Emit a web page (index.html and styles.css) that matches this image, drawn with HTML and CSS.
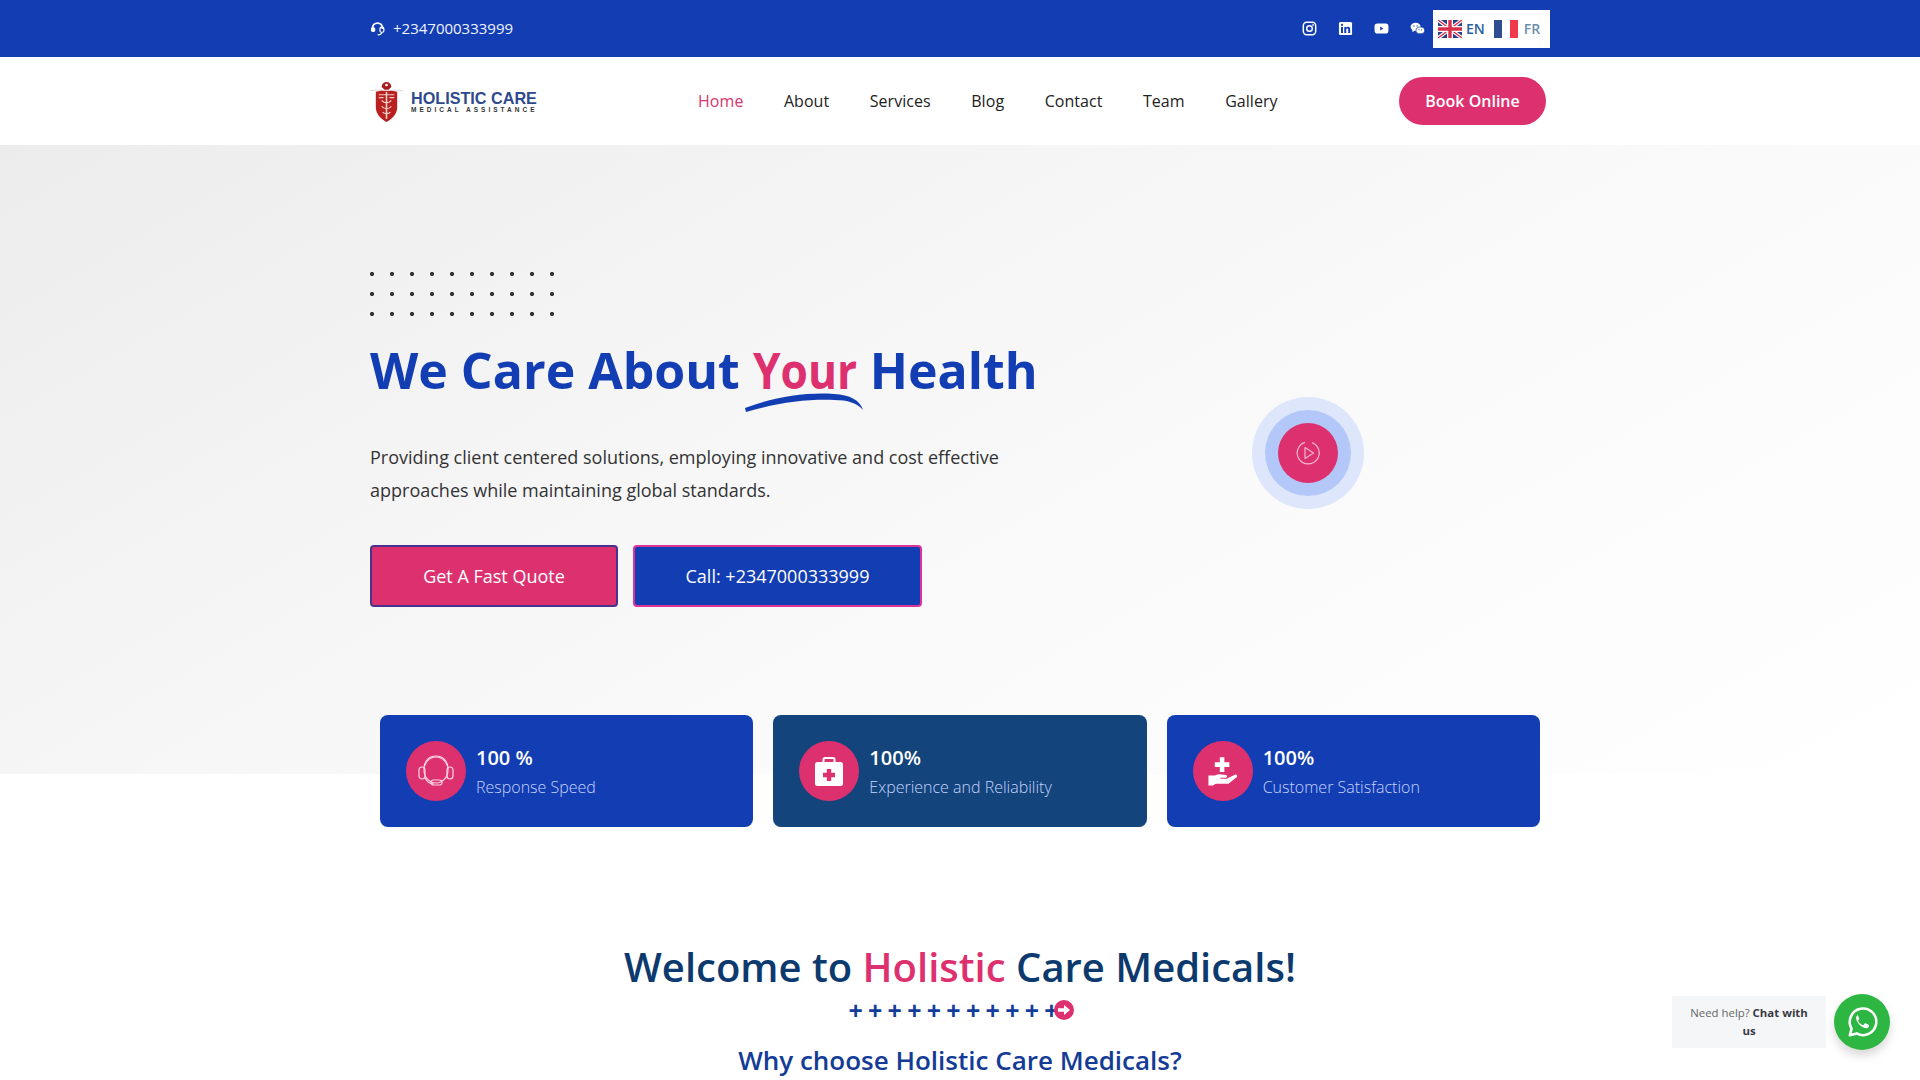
FILE: index.html
```html
<!DOCTYPE html>
<html lang="en">
<head>
<meta charset="utf-8">
<title>Holistic Care Medical Assistance</title>
<link rel="stylesheet" href="styles.css">
</head>
<body>
<header class="topbar">
  <div class="container topbar-inner">
    <a class="top-phone">
      <svg class="phone-icon" viewBox="0 0 16 16"><path d="M8 1.200a6.300 6.300 0 0 0-6.300 6.300v1.100h2V7.500a4.300 4.300 0 0 1 8.600 0v1.100h2V7.500A6.300 6.300 0 0 0 8 1.200z" fill="#fff"/><rect x="1" y="6.600" width="4.600" height="5" rx="1.800" fill="#fff"/><rect x="10.600" y="6.600" width="4.200" height="5.400" rx="1.600" fill="none" stroke="#fff" stroke-width="1.300"/><path d="M12.600 12c0 2-1.600 2.700-4.400 2.700" fill="none" stroke="#fff" stroke-width="1.300"/></svg>
      <span>+2347000333999</span>
    </a>
    <div class="top-right">
      <div class="socials">
        <svg viewBox="0 0 16 16"><rect x="1.400" y="1.400" width="13.200" height="13.200" rx="3.600" fill="none" stroke="#fff" stroke-width="1.600"/><circle cx="8" cy="8" r="3" fill="none" stroke="#fff" stroke-width="1.600"/><circle cx="11.800" cy="4.200" r=".9" fill="#fff"/></svg>
        <svg viewBox="0 0 16 16"><rect x="1" y="1" width="14" height="14" rx="1.600" fill="#fff"/><rect x="3.200" y="6.400" width="2.100" height="6.400" fill="#133db2"/><circle cx="4.250" cy="4.200" r="1.200" fill="#133db2"/><path d="M6.700 6.400h2v.9c.4-.6 1.100-1.100 2.100-1.100 1.700 0 2.200 1.100 2.200 2.800v3.800h-2.100V9.500c0-.8-.2-1.500-1-1.500-.9 0-1.100.7-1.100 1.500v3.300H6.700z" fill="#133db2"/></svg>
        <svg viewBox="0 0 16 16"><rect x=".6" y="2.600" width="14.800" height="10.800" rx="3" fill="#fff"/><path d="M6.600 5.800 10 8l-3.400 2.200z" fill="#133db2"/></svg>
        <svg viewBox="0 0 16 16"><ellipse cx="6" cy="6.200" rx="5.400" ry="4.400" fill="#fff"/><path d="M2.800 9.200 2.400 12l2.800-1.800z" fill="#fff"/><ellipse cx="11" cy="10" rx="4.600" ry="3.600" fill="#fff" stroke="#133db2" stroke-width=".8"/><circle cx="4.200" cy="5.200" r=".7" fill="#133db2"/><circle cx="7.600" cy="5.200" r=".7" fill="#133db2"/><circle cx="9.600" cy="9.400" r=".6" fill="#133db2"/><circle cx="12.400" cy="9.400" r=".6" fill="#133db2"/></svg>
      </div>
      <div class="lang">
        <svg class="flag" viewBox="0 0 24 18"><rect width="24" height="18" fill="#2b3f86"/><path d="M0 0 24 18M24 0 0 18" stroke="#fff" stroke-width="3.600"/><path d="M0 0 24 18M24 0 0 18" stroke="#d8304a" stroke-width="1.400"/><path d="M12 0v18M0 9h24" stroke="#fff" stroke-width="6"/><path d="M12 0v18M0 9h24" stroke="#d8304a" stroke-width="3.400"/></svg>
        <span class="lang-en">EN</span>
        <svg class="flag flag-fr" viewBox="0 0 24 18"><rect width="8" height="18" fill="#2f4e92"/><rect x="8" width="8" height="18" fill="#fff"/><rect x="16" width="8" height="18" fill="#f03a4c"/></svg>
        <span class="lang-fr">FR</span>
      </div>
    </div>
  </div>
</header>

<nav class="navbar">
  <div class="container navbar-inner">
    <a class="logo">
      <svg class="logo-mark" viewBox="0 0 34 44"><path d="M0 11c6-1 11-1 13 0M34 11c-6-1-11-1-13 0" stroke="#d9d5cf" stroke-width="1" fill="none"/><path d="M12 7a5 5 0 0 1 10 0l-3 3h-4z" fill="#a61c20"/><circle cx="17" cy="5" r="1.400" fill="#fff"/><path d="M6 12c3-1 7-1 11-1s8 0 11 1v16c0 7-5 12-11 15C11 40 6 35 6 28z" fill="#b9201f"/><path d="M9 15h16M9 18h5M20 18h5" stroke="#eec9c0" stroke-width="1.100" fill="none"/><path d="M17 12v28" stroke="#f1d6cd" stroke-width="1.600"/><path d="M12 21c3 3 7 3 10 0M12 27c3 3 7 3 10 0M13 33c2 2 6 2 8 0" stroke="#f1d6cd" stroke-width="1.200" fill="none"/></svg>
      <span class="logo-text">
        <span class="logo-title">HOLISTIC CARE</span>
        <span class="logo-sub">MEDICAL ASSISTANCE</span>
      </span>
    </a>
    <ul class="menu">
      <li class="active">Home</li>
      <li>About</li>
      <li>Services</li>
      <li>Blog</li>
      <li>Contact</li>
      <li>Team</li>
      <li>Gallery</li>
    </ul>
    <a class="book">Book Online</a>
  </div>
</nav>

<section class="hero">
  <div class="container hero-inner">
    <div class="hero-copy">
      <div class="dots"></div>
      <h1>We Care About <span class="your"><span class="your-word">Your</span><svg class="swoosh" viewBox="0 0 120 20"><path d="M1 16C30 5 62 0 90 2c16 1 26 6 29 16-6-7-15-10-29-10C62 7 32 11 2 20z" fill="#133db2"/></svg></span> Health</h1>
      <p>Providing client centered solutions, employing innovative and cost effective approaches while maintaining global standards.</p>
      <div class="cta">
        <a class="btn btn-pink">Get A Fast Quote</a>
        <a class="btn btn-blue">Call: +2347000333999</a>
      </div>
    </div>
    <div class="hero-media">
      <div class="ring-outer"><div class="ring-mid"><div class="ring-core">
        <svg viewBox="0 0 26 26"><path d="M17 2.600A11 11 0 1 1 10 2.400" fill="none" stroke="#f6b4cb" stroke-width="1.200"/><path d="M10 7.500 18.500 13 10 18.500z" fill="none" stroke="#f6b4cb" stroke-width="1.200" stroke-linejoin="round"/></svg>
      </div></div></div>
    </div>
  </div>
</section>

<section class="stats">
  <article class="stat">
    <div class="stat-icon">
      <svg viewBox="0 0 40 40"><ellipse cx="20" cy="19" rx="12" ry="13" fill="none" stroke="#fbd3e0" stroke-width="1.200"/><path d="M8 18C8 9 14 5 20 5s12 4 12 13" fill="none" stroke="#fbd3e0" stroke-width="1.200"/><rect x="3" y="16" width="6" height="12" rx="3" fill="none" stroke="#fbd3e0" stroke-width="1.200"/><rect x="31" y="16" width="6" height="12" rx="3" fill="none" stroke="#fbd3e0" stroke-width="1.200"/><path d="M9 27c2 4 5 6 9 6" fill="none" stroke="#fbd3e0" stroke-width="1.200"/><rect x="15" y="29" width="11" height="5" rx="2.500" fill="none" stroke="#fbd3e0" stroke-width="1.200"/></svg>
    </div>
    <div class="stat-text"><h3>100 %</h3><p>Response Speed</p></div>
  </article>
  <article class="stat stat-navy">
    <div class="stat-icon">
      <svg viewBox="0 0 40 40"><path d="M14.500 11V8.500A1.500 1.500 0 0 1 16 7h8a1.500 1.500 0 0 1 1.500 1.500V11" fill="none" stroke="#fff" stroke-width="2"/><rect x="6" y="11" width="28" height="24" rx="2.500" fill="#fff"/><path d="M17.800 18h4.400v3.800H26v4.400h-3.800V30h-4.400v-3.800H14v-4.400h3.800z" fill="#dd316f"/></svg>
    </div>
    <div class="stat-text"><h3>100%</h3><p>Experience and Reliability</p></div>
  </article>
  <article class="stat">
    <div class="stat-icon">
      <svg viewBox="-1 -3 44 44"><path d="M17.500 4h5v5.500H28v5h-5.500V20h-5v-5.500H12v-5h5.500z" fill="#fff"/><path d="M5 24h7l4-1.500c2 0 5 .5 8 1 2 .5 2 3-.5 3H18v1h7l9-4.500c2-.8 3.500 1.500 2 3L27 33H13l-3 2H5z" fill="#fff"/></svg>
    </div>
    <div class="stat-text"><h3>100%</h3><p>Customer Satisfaction</p></div>
  </article>
</section>

<section class="welcome">
  <h2>Welcome to <span>Holistic</span> Care Medicals!</h2>
  <div class="divider">
    <span>+</span><span>+</span><span>+</span><span>+</span><span>+</span><span>+</span><span>+</span><span>+</span><span>+</span><span>+</span><span>+</span>
    <svg class="divider-end" viewBox="0 0 20 20"><circle cx="10" cy="10" r="10" fill="#dd316f"/><path d="M4 8.300h6V5l6 5-6 5v-3.300H4z" fill="#fff"/></svg>
  </div>
  <h4>Why choose Holistic Care Medicals?</h4>
</section>

<aside class="chat">
  <div class="chat-note">Need help? <strong>Chat with</strong><br><strong>us</strong></div>
  <div class="chat-btn">
    <svg viewBox="0 0 32 32"><path d="M5 27l1.600-5.700A11.500 11.500 0 1 1 11 25.500z" fill="none" stroke="#fff" stroke-width="2.200" stroke-linejoin="round"/><path d="M12.200 9.800c-.5 0-1.300.5-1.600 1.500-.4 1.400.1 3.300 1.900 5.500 2 2.500 4.400 3.900 6.300 4.100 1.400.1 2.500-.7 2.800-1.700.1-.5.100-.9 0-1l-3-1.500c-.3-.1-.5 0-.7.200l-1 1.200c-.2.200-.4.200-.7.100-1.600-.7-3.100-2.100-3.900-3.600-.1-.3 0-.5.100-.6l.7-.9c.2-.2.200-.4.100-.6l-1.200-2.800c-.2-.4-.4-.5-.8-.5z" fill="#fff"/></svg>
  </div>
</aside>
</body>
</html>
```
FILE: styles.css
```css
* { box-sizing: border-box; }
html, body { margin: 0; padding: 0; }
body {
  width: 1920px;
  height: 1080px;
  overflow: hidden;
  background: #fff;
  color: #333;
  font-family: "Open Sans", "Noto Sans", sans-serif;
}
h1, h2, h3, h4, p, ul { margin: 0; padding: 0; }
.container { width: 1180px; margin: 0 auto; }

/* top bar */
.topbar { height: 57px; background: #133db2; color: #fff; }
.topbar-inner { height: 100%; display: flex; align-items: center; justify-content: space-between; }
.top-phone { display: flex; align-items: center; gap: 8px; font-size: 15px; line-height: 20px; color: #f0f4ff; margin-top: -1px; }
.phone-icon { width: 15px; height: 15px; }
.top-right { display: flex; align-items: center; gap: 8px; }
.socials { display: flex; align-items: center; gap: 21px; }
.socials svg { width: 15px; height: 15px; display: block; }
.lang {
  width: 117px;
  height: 38px;
  background: #fff;
  display: flex;
  align-items: center;
  padding-left: 5px;
  font-size: 14px;
  font-weight: 600;
}
.flag { width: 24px; height: 18px; display: block; }
.flag-fr { margin-left: 9px; }
.lang-en { margin-left: 4px; color: #2c5f9e; }
.lang-fr { margin-left: 6px; color: #6b8eae; }

/* nav */
.navbar { height: 88px; background: #fff; }
.navbar-inner { height: 100%; display: flex; align-items: center; }
.logo { display: flex; align-items: center; width: 328px; gap: 8px; }
.logo-mark { width: 33px; height: 43px; display: block; }
.logo-text { display: flex; flex-direction: column; padding-top: 2px; font-family: "Liberation Sans", Arial, sans-serif; font-weight: 700; }
.logo-title { font-size: 16.200px; line-height: 16px; color: #2f4a8c; white-space: nowrap; }
.logo-sub { font-size: 6.500px; line-height: 8px; letter-spacing: 3px; color: #333; white-space: nowrap; }
.menu { list-style: none; display: flex; gap: 40.500px; font-size: 16px; letter-spacing: .05px; color: #222; }
.menu .active { color: #d9356f; }
.book {
  margin-left: auto;
  margin-right: 4px;
  width: 147px;
  height: 48px;
  border-radius: 24px;
  background: #dd316f;
  color: #fff;
  font-size: 16px;
  font-weight: 600;
  display: flex;
  align-items: center;
  justify-content: center;
}

/* hero */
.hero {
  height: 629px;
  padding-top: 127px;
  background: linear-gradient(150deg, #ececec 0%, #f5f5f6 35%, #fafafb 60%, #ffffff 100%);
}
.hero-inner { display: flex; align-items: flex-start; }
.hero-copy { width: 696px; }
.dots {
  width: 186px;
  height: 44px;
  background-image: radial-gradient(circle at 2px 2px, #333 0, #333 1.900px, transparent 2.300px);
  background-size: 20px 20px;
}
h1 {
  margin-top: 20px;
  font-size: 50px;
  line-height: 68px;
  font-weight: 700;
  color: #133db2;
  white-space: nowrap;
}
.your { position: relative; display: inline-block; width: 104px; }
.your-word { display: inline-block; color: #dd316f; transform: scaleX(.885); transform-origin: 0 50%; }
.swoosh { position: absolute; left: -11px; top: 56px; width: 124px; height: 20px; }
p { line-height: 33px; }
.hero-copy p { margin-top: 37px; font-size: 18px; color: #333; width: 660px; }
.cta { margin-top: 38px; display: flex; gap: 15px; }
.btn {
  height: 62px;
  border-radius: 4px;
  border: 2px solid;
  color: #fff;
  font-size: 18px;
  font-weight: 500;
  display: flex;
  align-items: center;
  justify-content: center;
}
.btn-pink { width: 248px; background: #dd316f; border-color: #4b3290; }
.btn-blue { width: 289px; background: #133db2; border-color: #dd3399; }
.hero-media { width: 484px; padding-top: 125px; display: flex; justify-content: center; }
.ring-outer, .ring-mid, .ring-core { border-radius: 50%; display: flex; align-items: center; justify-content: center; }
.ring-outer { width: 112px; height: 112px; background: #dde6fb; }
.ring-mid { width: 86px; height: 86px; background: #b3c8f8; }
.ring-core { width: 60px; height: 60px; background: #dd316f; }
.ring-core svg { width: 26px; height: 26px; }

/* stats */
.stats {
  width: 1160px;
  margin: -59px auto 0;
  display: flex;
  gap: 20px;
  position: relative;
}
.stat {
  flex: 1;
  height: 112px;
  border-radius: 8px;
  background: #133db2;
  display: flex;
  align-items: center;
  padding-left: 26px;
  gap: 10px;
}
.stat-navy { background: #13447c; }
.stat-icon {
  width: 60px;
  height: 60px;
  border-radius: 50%;
  background: #dd316f;
  display: flex;
  align-items: center;
  justify-content: center;
}
.stat-icon svg { width: 40px; height: 40px; }
.stat-text { padding-top: 2px; }
.stat h3 { font-size: 20px; line-height: 30px; font-weight: 600; color: #fff; }
.stat p { font-size: 16px; line-height: 28px; font-weight: 300; color: #c3d3ff; }

/* welcome */
.welcome { margin-top: 114px; text-align: center; }
.welcome h2 { font-size: 40px; line-height: 52px; font-weight: 600; color: #0d3a6e; }
.welcome h2 span { color: #dd316f; }
.divider {
  margin-top: 5px;
  height: 24px;
  display: flex;
  justify-content: center;
  align-items: center;
  color: #133d9a;
  font-size: 25px;
  font-weight: 700;
  line-height: 24px;
}
.divider span { width: 19.600px; text-align: center; }
.divider-end { width: 20px; height: 20px; margin-left: -7px; }
.welcome h4 { margin-top: 20px; font-size: 26px; line-height: 36px; font-weight: 600; color: #143c96; }

/* chat */
.chat { position: fixed; right: 30px; bottom: 30px; display: flex; align-items: center; gap: 8px; }
.chat-note {
  width: 154px;
  height: 52px;
  padding: 8px 10px;
  background: #f5f6f8;
  font-size: 11.400px;
  line-height: 18px;
  text-align: center;
  color: #666;
}
.chat-note strong { color: #3a3a44; font-weight: 700; }
.chat-btn {
  width: 56px;
  height: 56px;
  border-radius: 50%;
  background: #2db742;
  box-shadow: 0 6px 10px rgba(0, 0, 0, .15);
  display: flex;
  align-items: center;
  justify-content: center;
}
.chat-btn svg { width: 37px; height: 37px; }
```
